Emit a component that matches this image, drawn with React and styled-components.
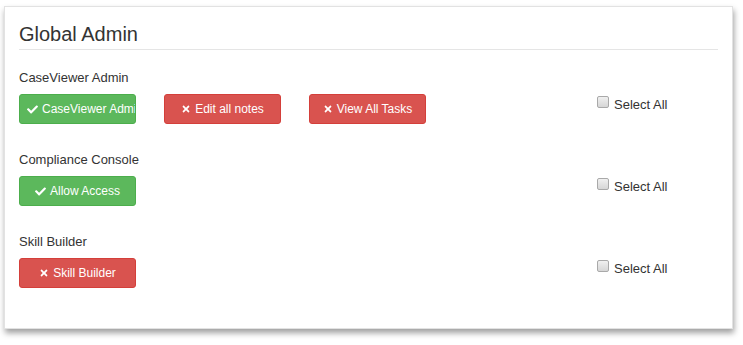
import React from 'react';
import styled, { createGlobalStyle } from 'styled-components';
import { FaCheck, FaTimes } from 'react-icons/fa';

const GlobalStyle = createGlobalStyle`
  body {
    margin: 0;
    background: #fff;
    font-family: "Liberation Sans", Arial, sans-serif;
    color: #333;
  }
`;

const Page = styled.div`
  padding: 6px 10px 16px 4px;
`;

const Card = styled.div`
  width: 729px;
  height: 323px;
  box-sizing: border-box;
  background: #fff;
  border: 1px solid #e2e2e2;
  box-shadow: 1px 4px 6px rgba(0, 0, 0, 0.38);
  padding: 16px 14px 0 14px;
`;

const Title = styled.h3`
  margin: 0;
  font-size: 20px;
  font-weight: 400;
  line-height: 22px;
  color: #333;
  padding-bottom: 4px;
  border-bottom: 1px solid #e5e5e5;
`;

const Section = styled.div`
  display: grid;
  grid-template-columns: 578px auto;
  margin-top: ${(p) => (p.$first ? '19px' : '27px')};
`;

const Label = styled.div`
  font-size: 13px;
  line-height: 18px;
  margin-bottom: 7px;
`;

const ButtonRow = styled.div`
  display: flex;
  gap: 28px;
`;

const Button = styled.button`
  width: 117px;
  height: 30px;
  box-sizing: border-box;
  padding: 0 7px;
  border-radius: 3px;
  border: 1px solid ${(p) => (p.$on ? '#4cae4c' : '#d43f3a')};
  background: ${(p) => (p.$on ? '#5cb85c' : '#d9534f')};
  color: #fff;
  font-family: "Liberation Sans", Arial, sans-serif;
  font-size: 12px;
  white-space: nowrap;
  overflow: hidden;
  display: flex;
  align-items: center;
  justify-content: ${(p) => (p.$clip ? 'flex-start' : 'center')};
  gap: 4px;
  svg {
    flex: none;
    font-size: ${(p) => (p.$on ? '11px' : '10px')};
  }
`;

const SelectAll = styled.label`
  display: flex;
  align-items: center;
  gap: 5px;
  font-size: 13px;
  margin-top: 26px;
  height: 18px;
  input {
    appearance: none;
    margin: 0;
    width: 12px;
    height: 12px;
    box-sizing: border-box;
    border: 1px solid #a9a9a9;
    border-radius: 2px;
    background: linear-gradient(#f0f0f0, #d6d6d6);
    position: relative;
    top: -2px;
  }
`;

const sections = [
  {
    name: 'CaseViewer Admin',
    buttons: [
      { label: 'CaseViewer Admin', on: true, clip: true },
      { label: 'Edit all notes', on: false },
      { label: 'View All Tasks', on: false },
    ],
  },
  { name: 'Compliance Console', buttons: [{ label: 'Allow Access', on: true }] },
  { name: 'Skill Builder', buttons: [{ label: 'Skill Builder', on: false }] },
];

export default function App() {
  return (
    <Page>
      <GlobalStyle />
      <Card>
        <Title>Global Admin</Title>
        {sections.map((s, i) => (
          <Section key={s.name} $first={i === 0}>
            <div>
              <Label>{s.name}</Label>
              <ButtonRow>
                {s.buttons.map((b) => (
                  <Button key={b.label} $on={b.on} $clip={b.clip}>
                    {b.on ? <FaCheck /> : <FaTimes />}
                    {b.label}
                  </Button>
                ))}
              </ButtonRow>
            </div>
            <SelectAll>
              <input type="checkbox" />
              Select All
            </SelectAll>
          </Section>
        ))}
      </Card>
    </Page>
  );
}
